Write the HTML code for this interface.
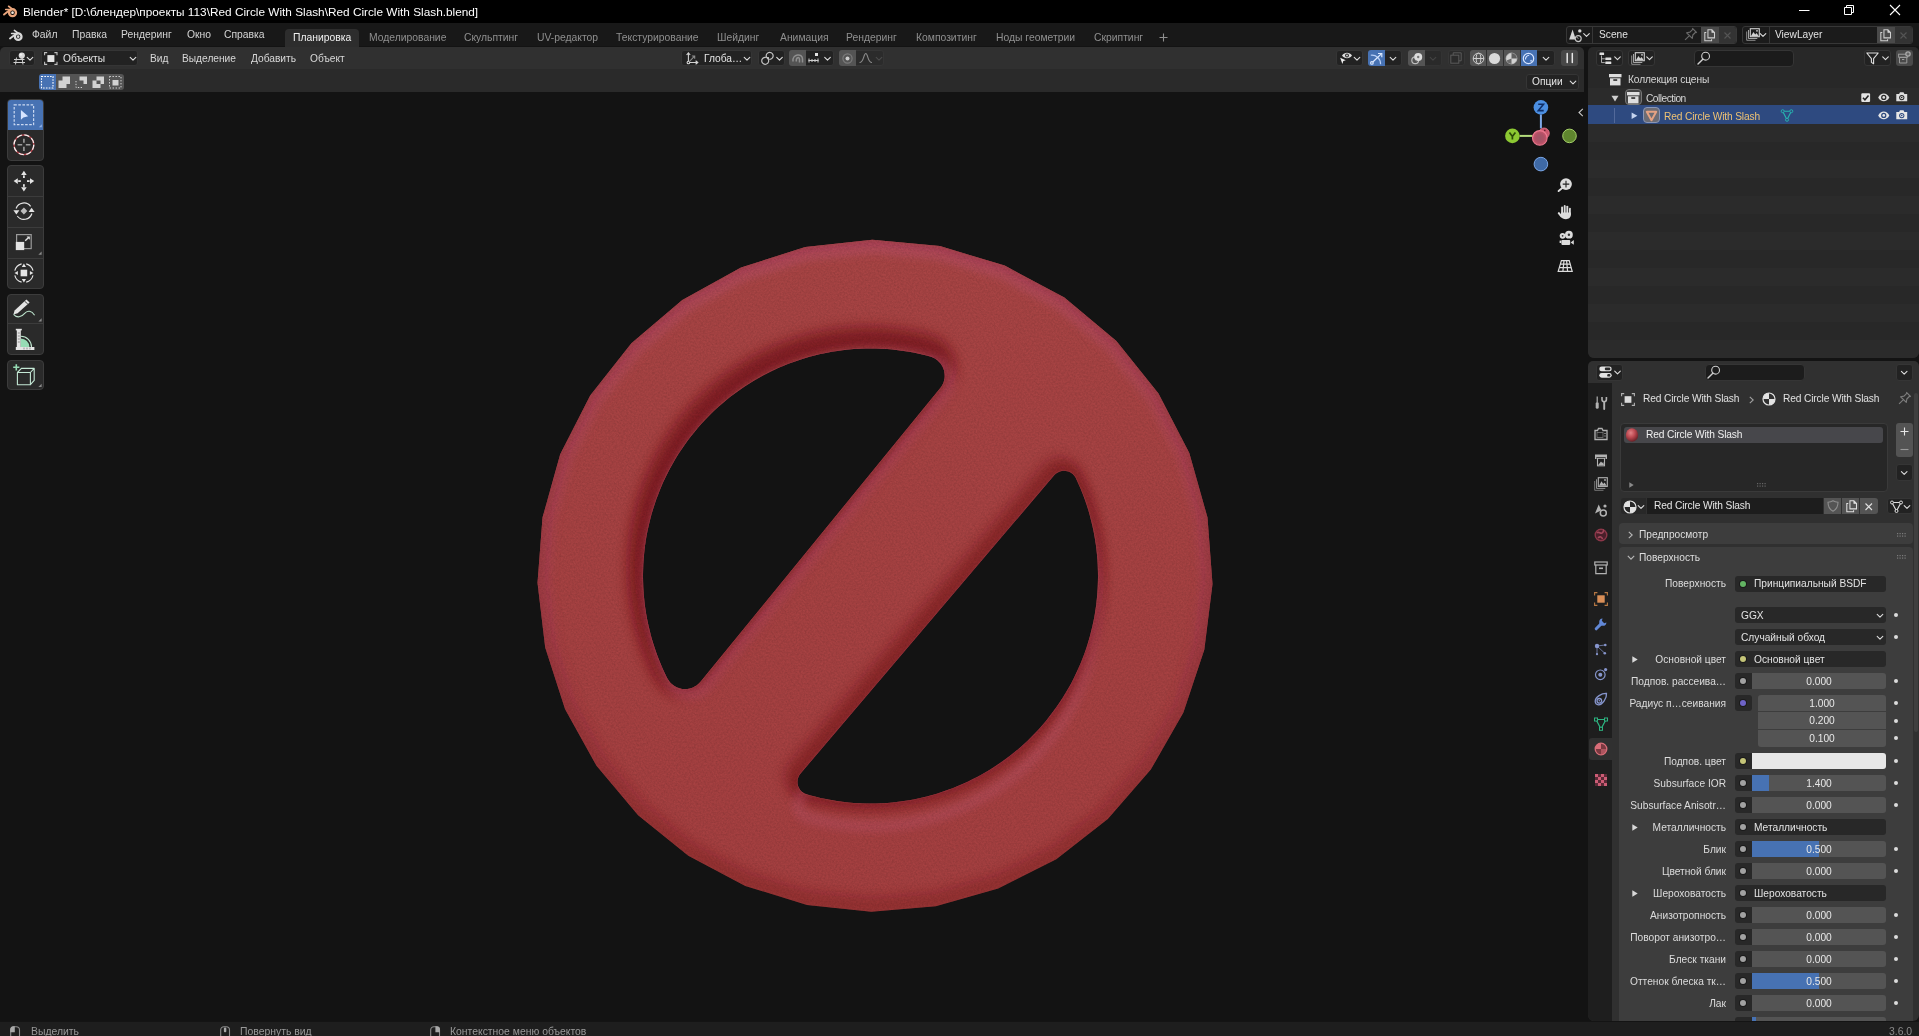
<!DOCTYPE html>
<html lang="ru"><head><meta charset="utf-8"><title>Blender</title>
<style>

*{box-sizing:border-box;margin:0;padding:0}
html,body{width:1919px;height:1036px;overflow:hidden;background:#131313}
body{font-family:"Liberation Sans",sans-serif;font-size:10.2px;color:#e0e0e0;position:relative;-webkit-font-smoothing:antialiased}
.a{position:absolute}
.t{position:absolute;white-space:nowrap;line-height:14px;height:14px;will-change:transform}
svg{position:absolute;overflow:visible}
.ic{position:absolute}
/* title bar */
#title{left:0;top:0;width:1919px;height:23px;background:#000}
#title .t{font-size:11.8px;color:#fff;left:23.3px;top:5px;line-height:15px}
/* top bar */
#topbar{left:0;top:23px;width:1919px;height:23px;background:#181818}
.mi{color:#d4d4d4;font-size:10.35px}
.tab{color:#8f8f8f;font-size:10.35px}
#tabact{left:285px;top:29px;width:74px;height:18px;background:#2d2d2d;border-radius:4px 4px 0 0}
/* 3d header */
#vhead{left:0;top:47px;width:1584px;height:22px;background:#303030;border-radius:5px 5px 0 0}
#vtool{left:0;top:69px;width:1584px;height:23px;background:#2a2a2a}
.btn{position:absolute;background:#222;border:1px solid #383838;border-radius:3px}
.btng{position:absolute;background:#4f4f4f;border-radius:3px}
.btnb{position:absolute;background:#4772b3;border-radius:3px}
/* viewport */
#view{left:0;top:92px;width:1588px;height:930px;background:#131313;overflow:hidden}
.tb{position:absolute;left:7px;width:37px;background:#2a2a2a;border:1px solid #3c3c3c;border-radius:4px;overflow:hidden}
.tb i{position:absolute;left:0;width:35px;height:1px;background:#3c3c3c}
/* status */
#status{left:0;top:1021px;width:1919px;height:15px;background:#1e1e1e;border-top:1.5px solid #141414;overflow:hidden}
#status .t{color:#999;font-size:10.4px}
/* outliner */
#outl{left:1588px;top:47px;width:331px;height:311px;background:#282828;border-radius:5px 5px 6px 6px;overflow:hidden}
.row{position:absolute;left:0;width:331px;height:18px}
.fld{position:absolute;background:#1d1d1d;border:1px solid #3a3a3a;border-radius:3px}
/* properties */
#props{left:1588px;top:360.5px;width:331px;height:660.5px;background:#303030;border-radius:5px 5px 6px 6px;overflow:hidden}
#nav{left:0;top:22px;width:24px;height:640px;background:#1e1e1e}
.panel{position:absolute;left:31px;width:294px;background:#3d3d3d;border-radius:4px}
.lab{position:absolute;white-space:nowrap;text-align:right;width:130px;left:8px;line-height:16px;height:16px;color:#dcdcdc}
.num{position:absolute;background:#545454;height:16px;line-height:16px;text-align:center;color:#e6e6e6}
.sock{position:absolute;left:147px;width:17px;height:16px;background:#282828;border-radius:3px 0 0 3px}
.sock b{position:absolute;left:5px;top:5px;width:6px;height:6px;border-radius:50%;background:#a1a1a1}
.men{position:absolute;left:147px;width:151px;height:16px;background:#282828;border-radius:3px;line-height:16px;padding-left:6px;color:#dcdcdc}
.dot{position:absolute;left:306px;width:4px;height:4px;border-radius:50%;background:#dedede}
.tri{position:absolute;width:0;height:0;border-left:6px solid #ddd;border-top:3.5px solid transparent;border-bottom:3.5px solid transparent}

</style></head>
<body>
<div id="view" class="a"></div>
<svg class="a" style="left:0;top:0" width="1588" height="1036" viewBox="0 0 1588 1036">
<defs>
<clipPath id="shp"><path d="M872.4,239.8L939.9,246.1L1004.7,265.6L1064.4,297.6L1116.4,340.9L1158.5,393.4L1189.3,453.1L1207.5,517.5L1212.5,584.0L1204.3,649.8L1183.4,712.5L1150.8,769.6L1107.8,819.1L1056.3,859.2L998.2,888.6L935.8,906.3L871.3,911.8L807.0,904.9L745.3,886.0L688.3,855.7L638.1,815.2L596.5,765.8L565.1,709.2L545.2,647.5L537.5,582.8L542.5,517.6L560.2,454.3L590.2,395.4L631.4,343.2L682.3,299.9L741.0,267.4L805.2,247.1Z M667.1,677.9L668.4,680.1L669.9,682.2L671.7,684.0L672.7,684.8L674.8,686.3L677.2,687.5L679.6,688.3L682.1,688.9L684.7,689.1L687.3,689.0L689.8,688.5L692.3,687.7L694.6,686.6L696.8,685.3L698.8,683.6L700.5,681.7L940.9,387.3L942.3,385.1L943.4,382.8L943.8,381.6L944.4,379.1L944.6,377.8L944.7,376.5L944.6,373.9L944.2,371.4L943.9,370.1L943.5,368.9L942.5,366.6L941.1,364.3L940.4,363.3L938.6,361.4L937.7,360.5L936.7,359.7L934.5,358.3L933.4,357.7L931.0,356.7L925.5,355.3L920.1,354.0L914.6,352.8L909.2,351.8L903.6,350.9L898.1,350.2L893.0,349.6L887.0,349.1L881.4,348.8L876.3,348.6L870.3,348.5L865.2,348.6L859.6,348.8L854.0,349.1L848.4,349.6L842.4,350.2L837.4,350.9L831.8,351.8L825.9,352.9L820.4,354.1L815.5,355.3L809.6,356.8L804.7,358.2L799.4,359.9L793.6,361.9L788.4,363.8L783.7,365.7L778.1,368.1L773.5,370.2L768.4,372.7L763.0,375.5L758.2,378.2L753.8,380.7L748.6,383.9L744.3,386.7L739.7,389.9L734.8,393.4L730.3,396.8L726.4,400.0L721.7,403.9L717.9,407.3L713.8,411.1L709.5,415.3L705.9,419.0L702.1,423.0L698.1,427.6L694.5,431.9L691.0,436.2L687.9,440.3L684.4,445.2L681.5,449.4L678.4,454.1L675.2,459.3L672.7,463.7L670.0,468.5L667.2,473.9L664.7,479.0L662.6,483.6L660.2,489.2L658.2,494.4L656.4,499.1L654.4,504.9L652.9,509.7L651.3,515.1L649.8,521.0L648.5,526.4L647.4,531.4L646.3,537.3L645.4,542.9L644.7,547.9L644.1,553.9L643.6,559.5L643.3,564.6L643.1,570.7L643.0,575.8L643.1,581.3L643.3,587.4L643.6,592.5L644.1,598.1L644.7,604.1L645.4,609.1L646.3,614.7L647.4,620.6L648.5,625.6L649.8,631.0L651.3,636.9L652.7,641.8L654.4,647.1L656.4,652.9L658.3,658.1L660.2,662.8L662.6,668.4L664.7,673.0Z M800.6,773.5L799.1,775.6L798.4,777.2L797.8,778.8L797.5,781.4L797.6,784.0L798.0,785.7L799.0,788.0L800.4,790.2L801.6,791.4L803.0,792.5L804.4,793.4L806.0,794.1L809.7,795.2L815.1,796.6L820.5,797.9L826.0,799.1L831.4,800.1L837.0,801.0L842.5,801.8L848.4,802.4L853.9,802.9L859.5,803.2L865.1,803.4L870.7,803.5L876.2,803.4L881.8,803.2L887.1,802.9L892.6,802.4L898.2,801.8L903.7,801.1L909.2,800.2L914.7,799.2L920.2,798.0L925.6,796.7L931.3,795.2L936.7,793.7L941.7,792.1L947.3,790.1L952.5,788.2L957.7,786.1L962.5,784.0L967.6,781.7L972.9,779.1L977.6,776.7L982.5,774.0L987.3,771.2L992.1,768.3L997.0,765.1L1001.4,762.1L1005.9,758.8L1010.6,755.2L1014.9,751.8L1019.0,748.4L1023.2,744.7L1027.3,740.9L1031.5,736.8L1035.4,732.8L1039.0,728.9L1042.7,724.7L1046.3,720.4L1049.9,715.8L1053.1,711.6L1056.4,707.1L1059.7,702.3L1062.8,697.6L1065.5,693.1L1068.5,688.0L1071.1,683.4L1073.6,678.4L1076.2,673.1L1078.4,668.3L1080.6,663.2L1082.8,657.7L1084.8,652.5L1086.5,647.5L1088.2,641.9L1089.8,636.5L1091.2,631.1L1092.4,626.0L1093.6,620.5L1094.7,614.7L1095.5,609.5L1096.3,604.0L1096.9,598.1L1097.4,592.6L1097.7,587.3L1097.9,581.4L1098.0,576.2L1097.9,570.6L1097.7,564.7L1097.4,559.4L1096.9,553.9L1096.3,548.0L1095.5,542.5L1094.6,536.9L1093.6,531.5L1092.4,526.0L1091.2,520.9L1089.8,515.5L1088.2,509.8L1086.5,504.5L1084.8,499.5L1082.8,494.3L1080.7,489.1L1078.5,484.0L1076.2,478.9L1075.4,477.3L1074.5,475.9L1072.7,474.0L1070.6,472.5L1068.3,471.4L1065.8,470.9L1063.2,470.8L1060.7,471.2L1058.3,472.2L1056.1,473.6L1054.2,475.3Z" clip-rule="evenodd"/></clipPath>
<path id="pO" d="M872.4,239.8L939.9,246.1L1004.7,265.6L1064.4,297.6L1116.4,340.9L1158.5,393.4L1189.3,453.1L1207.5,517.5L1212.5,584.0L1204.3,649.8L1183.4,712.5L1150.8,769.6L1107.8,819.1L1056.3,859.2L998.2,888.6L935.8,906.3L871.3,911.8L807.0,904.9L745.3,886.0L688.3,855.7L638.1,815.2L596.5,765.8L565.1,709.2L545.2,647.5L537.5,582.8L542.5,517.6L560.2,454.3L590.2,395.4L631.4,343.2L682.3,299.9L741.0,267.4L805.2,247.1Z"/>
<path id="pH1" d="M667.1,677.9L668.4,680.1L669.9,682.2L671.7,684.0L672.7,684.8L674.8,686.3L677.2,687.5L679.6,688.3L682.1,688.9L684.7,689.1L687.3,689.0L689.8,688.5L692.3,687.7L694.6,686.6L696.8,685.3L698.8,683.6L700.5,681.7L940.9,387.3L942.3,385.1L943.4,382.8L943.8,381.6L944.4,379.1L944.6,377.8L944.7,376.5L944.6,373.9L944.2,371.4L943.9,370.1L943.5,368.9L942.5,366.6L941.1,364.3L940.4,363.3L938.6,361.4L937.7,360.5L936.7,359.7L934.5,358.3L933.4,357.7L931.0,356.7L925.5,355.3L920.1,354.0L914.6,352.8L909.2,351.8L903.6,350.9L898.1,350.2L893.0,349.6L887.0,349.1L881.4,348.8L876.3,348.6L870.3,348.5L865.2,348.6L859.6,348.8L854.0,349.1L848.4,349.6L842.4,350.2L837.4,350.9L831.8,351.8L825.9,352.9L820.4,354.1L815.5,355.3L809.6,356.8L804.7,358.2L799.4,359.9L793.6,361.9L788.4,363.8L783.7,365.7L778.1,368.1L773.5,370.2L768.4,372.7L763.0,375.5L758.2,378.2L753.8,380.7L748.6,383.9L744.3,386.7L739.7,389.9L734.8,393.4L730.3,396.8L726.4,400.0L721.7,403.9L717.9,407.3L713.8,411.1L709.5,415.3L705.9,419.0L702.1,423.0L698.1,427.6L694.5,431.9L691.0,436.2L687.9,440.3L684.4,445.2L681.5,449.4L678.4,454.1L675.2,459.3L672.7,463.7L670.0,468.5L667.2,473.9L664.7,479.0L662.6,483.6L660.2,489.2L658.2,494.4L656.4,499.1L654.4,504.9L652.9,509.7L651.3,515.1L649.8,521.0L648.5,526.4L647.4,531.4L646.3,537.3L645.4,542.9L644.7,547.9L644.1,553.9L643.6,559.5L643.3,564.6L643.1,570.7L643.0,575.8L643.1,581.3L643.3,587.4L643.6,592.5L644.1,598.1L644.7,604.1L645.4,609.1L646.3,614.7L647.4,620.6L648.5,625.6L649.8,631.0L651.3,636.9L652.7,641.8L654.4,647.1L656.4,652.9L658.3,658.1L660.2,662.8L662.6,668.4L664.7,673.0Z"/>
<path id="pH2" d="M800.6,773.5L799.1,775.6L798.4,777.2L797.8,778.8L797.5,781.4L797.6,784.0L798.0,785.7L799.0,788.0L800.4,790.2L801.6,791.4L803.0,792.5L804.4,793.4L806.0,794.1L809.7,795.2L815.1,796.6L820.5,797.9L826.0,799.1L831.4,800.1L837.0,801.0L842.5,801.8L848.4,802.4L853.9,802.9L859.5,803.2L865.1,803.4L870.7,803.5L876.2,803.4L881.8,803.2L887.1,802.9L892.6,802.4L898.2,801.8L903.7,801.1L909.2,800.2L914.7,799.2L920.2,798.0L925.6,796.7L931.3,795.2L936.7,793.7L941.7,792.1L947.3,790.1L952.5,788.2L957.7,786.1L962.5,784.0L967.6,781.7L972.9,779.1L977.6,776.7L982.5,774.0L987.3,771.2L992.1,768.3L997.0,765.1L1001.4,762.1L1005.9,758.8L1010.6,755.2L1014.9,751.8L1019.0,748.4L1023.2,744.7L1027.3,740.9L1031.5,736.8L1035.4,732.8L1039.0,728.9L1042.7,724.7L1046.3,720.4L1049.9,715.8L1053.1,711.6L1056.4,707.1L1059.7,702.3L1062.8,697.6L1065.5,693.1L1068.5,688.0L1071.1,683.4L1073.6,678.4L1076.2,673.1L1078.4,668.3L1080.6,663.2L1082.8,657.7L1084.8,652.5L1086.5,647.5L1088.2,641.9L1089.8,636.5L1091.2,631.1L1092.4,626.0L1093.6,620.5L1094.7,614.7L1095.5,609.5L1096.3,604.0L1096.9,598.1L1097.4,592.6L1097.7,587.3L1097.9,581.4L1098.0,576.2L1097.9,570.6L1097.7,564.7L1097.4,559.4L1096.9,553.9L1096.3,548.0L1095.5,542.5L1094.6,536.9L1093.6,531.5L1092.4,526.0L1091.2,520.9L1089.8,515.5L1088.2,509.8L1086.5,504.5L1084.8,499.5L1082.8,494.3L1080.7,489.1L1078.5,484.0L1076.2,478.9L1075.4,477.3L1074.5,475.9L1072.7,474.0L1070.6,472.5L1068.3,471.4L1065.8,470.9L1063.2,470.8L1060.7,471.2L1058.3,472.2L1056.1,473.6L1054.2,475.3Z"/>
<linearGradient id="gB" gradientUnits="userSpaceOnUse" x1="0" y1="240" x2="0" y2="912"><stop offset="0" stop-color="#a94545"/><stop offset="1" stop-color="#a64041"/></linearGradient>
<linearGradient id="gP" gradientUnits="userSpaceOnUse" x1="0" y1="240" x2="0" y2="912"><stop offset="0" stop-color="#c25a76" stop-opacity=".6"/><stop offset=".55" stop-color="#c25a76" stop-opacity=".4"/><stop offset=".9" stop-color="#c25a76" stop-opacity="0"/></linearGradient>
<filter id="nz" x="0" y="0" width="100%" height="100%"><feTurbulence type="fractalNoise" baseFrequency="0.55" numOctaves="2" seed="7" result="t"/><feColorMatrix in="t" type="matrix" values="0 0 0 0 0  0 0 0 0 0  0 0 0 0 0  1.6 0 0 0 -0.55"/></filter>
<filter id="bl2" x="-10%" y="-10%" width="120%" height="120%"><feGaussianBlur stdDeviation="2"/></filter>
<filter id="bl4" x="-10%" y="-10%" width="120%" height="120%"><feGaussianBlur stdDeviation="4"/></filter>
<filter id="bl7" x="-10%" y="-10%" width="120%" height="120%"><feGaussianBlur stdDeviation="7"/></filter>
</defs>
<g clip-path="url(#shp)" fill="none">
<rect x="530" y="230" width="700" height="700" fill="url(#gB)"/>
<use href="#pO" stroke="url(#gP)" stroke-width="25" filter="url(#bl4)"/>
<use href="#pO" transform="translate(0,-5)" stroke="#720c12" stroke-width="14" filter="url(#bl7)" opacity=".42"/>
<use href="#pH1" transform="translate(-3,-3)" stroke="#720c12" stroke-width="20" filter="url(#bl7)" opacity=".34"/>
<use href="#pH2" stroke="#720c12" stroke-width="16" filter="url(#bl4)" opacity=".33"/>
<use href="#pH1" transform="translate(-2,-10)" stroke="#720c12" stroke-width="22" filter="url(#bl7)" opacity=".62"/>
<use href="#pH2" transform="translate(-5,-6)" stroke="#720c12" stroke-width="14" filter="url(#bl7)" opacity=".45"/>
<use href="#pH1" transform="translate(5,5)" stroke="#c25a76" stroke-width="12" filter="url(#bl4)" opacity=".42"/>
<use href="#pH2" transform="translate(0,23)" stroke="#c25a76" stroke-width="10" filter="url(#bl4)" opacity=".36"/>
<use href="#pH1" stroke="#c25a76" stroke-width="1.4" opacity=".22"/>
<use href="#pH2" stroke="#c25a76" stroke-width="1.4" opacity=".22"/>
<rect x="530" y="230" width="700" height="700" fill="#000" filter="url(#nz)" opacity=".09"/>
<rect x="530" y="230" width="700" height="700" fill="#ffb8a8" filter="url(#nz)" opacity=".09" transform="translate(3,5)"/>
</g>
</svg>
<div id="vhead" class="a"></div><div id="vtool" class="a"></div>
<div class="a" style="left:8.5px;top:50px;width:26.5px;height:16px;background:#222;border:1px solid #353535;border-radius:3px"></div><svg class="a" style="left:12.5px;top:51.5px" width="13" height="13"><g stroke="#cfcfcf" stroke-width="1" fill="none"><path d="M1,7.5H11.5M0.5,10.5H12M3.5,5.5L2.5,12.5M9,5.5L10,12.5"/></g><circle cx="8.8" cy="3.6" r="3.1" fill="#d6d6d6"/><circle cx="7.8" cy="2.6" r="1.2" fill="#f2f2f2"/></svg><svg class="a" style="left:0;top:0" width="1" height="1"><path d="M27.2,57.3L30.0,60.1L32.8,57.3" fill="none" stroke="#ddd" stroke-width="1.1" stroke-linecap="round" stroke-linejoin="round"/></svg><div class="a" style="left:41px;top:50px;width:97px;height:16px;background:#222;border:1px solid #353535;border-radius:3px"></div><svg class="a" style="left:43.5px;top:51.5px" width="14" height="13"><path d="M0.6,3.2V0.6H3.2M10.4,0.6H13V3.2M13,9.8V12.4H10.4M3.2,12.4H0.6V9.8" fill="none" stroke="#bdbdbd" stroke-width="1.1"/><rect x="3.4" y="3.1" width="7" height="6.9" fill="#e4e4e4"/></svg><span class="t" style="left:63px;top:51.5px;color:#e4e4e4;">Объекты</span><svg class="a" style="left:0;top:0" width="1" height="1"><path d="M130.2,57.3L133.0,60.1L135.8,57.3" fill="none" stroke="#ddd" stroke-width="1.1" stroke-linecap="round" stroke-linejoin="round"/></svg><span class="t" style="left:150px;top:51.5px;color:#d8d8d8;">Вид</span><span class="t" style="left:182px;top:51.5px;color:#d8d8d8;">Выделение</span><span class="t" style="left:251px;top:51.5px;color:#d8d8d8;">Добавить</span><span class="t" style="left:309.5px;top:51.5px;color:#d8d8d8;">Объект</span><div class="a" style="left:39px;top:73.5px;width:16.5px;height:16.5px;background:#4772b3;border-radius:3px 0 0 3px"></div><svg class="a" style="left:39px;top:73.5px" width="17" height="17"><rect x="2.5" y="2.5" width="11.5" height="11.5" fill="none" stroke="#fff" stroke-width="1.1" stroke-dasharray="1.6 1.25"/></svg><div class="a" style="left:56px;top:73.5px;width:16.5px;height:16.5px;background:#545454;"></div><div class="a" style="left:73px;top:73.5px;width:16.5px;height:16.5px;background:#545454;"></div><div class="a" style="left:90px;top:73.5px;width:16.5px;height:16.5px;background:#545454;"></div><div class="a" style="left:107px;top:73.5px;width:16.5px;height:16.5px;background:#545454;border-radius:0 3px 3px 0"></div><svg class="a" style="left:56px;top:73.5px" width="17" height="17"><path d="M6.5,2.5H14V10H10.5V14H2.5V6.5H6.5Z" fill="#d2d2d2"/></svg><svg class="a" style="left:73px;top:73.5px" width="17" height="17"><path d="M6.5,2.5H14V10H10.5V6.5H6.5Z" fill="#d2d2d2"/><path d="M3,7V13.5H10" fill="none" stroke="#d2d2d2" stroke-width="1" stroke-dasharray="1.3 1.5"/></svg><svg class="a" style="left:90px;top:73.5px" width="17" height="17"><path d="M6.5,2.5H14V10H10.5V14H2.5V6.5H6.5ZM6.5,6.5V10H10.5V6.5Z" fill="#d2d2d2" fill-rule="evenodd"/></svg><svg class="a" style="left:107px;top:73.5px" width="17" height="17"><rect x="2.5" y="2.5" width="11.5" height="11.5" fill="none" stroke="#d2d2d2" stroke-width="1" stroke-dasharray="1.4 1.6"/><rect x="5.5" y="6" width="6" height="5.5" fill="#d2d2d2"/></svg><div class="a" style="left:681px;top:50px;width:71px;height:16px;background:#222;border:1px solid #353535;border-radius:3px"></div><svg class="a" style="left:684.5px;top:51.5px" width="14" height="13"><g fill="none" stroke="#d2d2d2" stroke-width="1.1"><path d="M3.4,9.2V1.2M1.6,3L3.4,0.8L5.2,3M4.7,10.5H12.2M10.6,8.7L12.8,10.5L10.6,12.3"/><circle cx="3.4" cy="10.5" r="1.3"/><path d="M4.3,9.6L9.3,4.4M6.9,4H9.7V6.8" stroke="#8c8c8c"/></g></svg><span class="t" style="left:704px;top:51.5px;color:#e4e4e4;">Глоба…</span><svg class="a" style="left:0;top:0" width="1" height="1"><path d="M744.2,57.3L747.0,60.1L749.8,57.3" fill="none" stroke="#ddd" stroke-width="1.1" stroke-linecap="round" stroke-linejoin="round"/></svg><div class="a" style="left:758px;top:50px;width:26.5px;height:16px;background:#222;border:1px solid #353535;border-radius:3px"></div><svg class="a" style="left:761px;top:52px" width="14" height="13"><g fill="none" stroke="#c4c4c4" stroke-width="1.2"><path d="M6.1,6.2A3.5,3.5 0 1 1 8.3,7.3"/><path d="M6.9,6.6A3.5,3.5 0 1 1 4.9,5.4"/></g><circle cx="7" cy="5.9" r="1" fill="#e8e8e8"/></svg><svg class="a" style="left:0;top:0" width="1" height="1"><path d="M776.7,57.3L779.5,60.1L782.3,57.3" fill="none" stroke="#ddd" stroke-width="1.1" stroke-linecap="round" stroke-linejoin="round"/></svg><div class="a" style="left:789px;top:50px;width:17px;height:16px;background:#545454;border-radius:3px 0 0 3px"></div><svg class="a" style="left:790.5px;top:52px" width="14" height="12"><g fill="none" stroke="#8f8f8f" stroke-width="1.5"><path d="M2,9.5C1,2 11.5,0.5 11.5,7V10.5"/><path d="M5.3,9.5C4.8,5 8.5,4.5 8.5,7.5V10.5"/></g></svg><div class="a" style="left:806px;top:50px;width:27.5px;height:16px;background:#222;border:1px solid #353535;border-left:none;border-radius:0 3px 3px 0"></div><svg class="a" style="left:808px;top:52px" width="13" height="12"><g stroke="#cfcfcf" stroke-width="1" fill="none"><path d="M0.5,8.5H10.5M1,6.5V10.5M4,7V10M7,7V10M10,6.5V10.5"/></g><rect x="7" y="1" width="3" height="3" fill="#e4e4e4"/></svg><svg class="a" style="left:0;top:0" width="1" height="1"><path d="M824.7,57.3L827.5,60.1L830.3,57.3" fill="none" stroke="#ddd" stroke-width="1.1" stroke-linecap="round" stroke-linejoin="round"/></svg><div class="a" style="left:839px;top:50px;width:17px;height:16px;background:#545454;border-radius:3px 0 0 3px"></div><svg class="a" style="left:841px;top:51.5px" width="13" height="13"><circle cx="6.5" cy="6.5" r="4.6" fill="none" stroke="#7a7a7a" stroke-width="1.2"/><circle cx="6.5" cy="6.5" r="2" fill="#cdcdcd"/></svg><div class="a" style="left:856px;top:50px;width:28px;height:16px;background:#2b2b2b;border:1px solid #353535;border-left:none;border-radius:0 3px 3px 0"></div><svg class="a" style="left:858.5px;top:52px" width="14" height="12"><path d="M0.5,10.5C5,10.5 4.5,1.5 6.8,1.5C9,1.5 8.5,10.5 13,10.5" fill="none" stroke="#8a8a8a" stroke-width="1.1"/></svg><svg class="a" style="left:0;top:0" width="1" height="1"><path d="M876.2,57.3L879.0,60.1L881.8,57.3" fill="none" stroke="#4a4a4a" stroke-width="1.1" stroke-linecap="round" stroke-linejoin="round"/></svg><div class="a" style="left:1336px;top:50px;width:26.5px;height:16px;background:#222;border:1px solid #353535;border-radius:3px"></div><svg class="a" style="left:1338.5px;top:51px" width="14" height="14"><path d="M3,4.6C5.5,0.8 10.5,0.8 13,4.6C10.5,8.2 5.5,8.2 3,4.6Z" fill="#dcdcdc"/><circle cx="8" cy="4.5" r="1.9" fill="#222"/><circle cx="8" cy="4.5" r="0.9" fill="#dcdcdc"/><path d="M1.2,6.8L6.8,9.3L4.3,10.1L3.4,12.9Z" fill="#f0f0f0"/></svg><svg class="a" style="left:0;top:0" width="1" height="1"><path d="M1354.2,57.3L1357.0,60.1L1359.8,57.3" fill="none" stroke="#ddd" stroke-width="1.1" stroke-linecap="round" stroke-linejoin="round"/></svg><div class="a" style="left:1368px;top:50px;width:16.5px;height:16px;background:#4772b3;border-radius:3px 0 0 3px"></div><svg class="a" style="left:1369.5px;top:51.5px" width="14" height="13"><g fill="none" stroke="#dce9ff" stroke-width="1.15"><path d="M10.6,12.2A8.8,8.8 0 0 0 0.8,3.2" stroke="#b9d0f7"/><path d="M2.8,10L11.2,2"/><path d="M8,1.5H11.8V5.3" /><circle cx="1.9" cy="10.9" r="1.3"/></g></svg><div class="a" style="left:1384.5px;top:50px;width:17px;height:16px;background:#222;border:1px solid #353535;border-left:none;border-radius:0 3px 3px 0"></div><svg class="a" style="left:0;top:0" width="1" height="1"><path d="M1390.2,57.3L1393.0,60.1L1395.8,57.3" fill="none" stroke="#ddd" stroke-width="1.1" stroke-linecap="round" stroke-linejoin="round"/></svg><div class="a" style="left:1408px;top:50px;width:16.5px;height:16px;background:#545454;border-radius:3px 0 0 3px"></div><svg class="a" style="left:1409.5px;top:51.5px" width="14" height="13"><circle cx="5.2" cy="8.2" r="3.4" fill="none" stroke="#bdbdbd" stroke-width="1.2"/><circle cx="8.2" cy="5" r="4" fill="#dcdcdc"/><circle cx="8.2" cy="5" r="1.2" fill="#777"/><path d="M5.2,8.2L7,9.3" stroke="#777" stroke-width="1"/></svg><div class="a" style="left:1424.5px;top:50px;width:17px;height:16px;background:#2a2a2a;border:1px solid #333;border-left:none;border-radius:0 3px 3px 0"></div><svg class="a" style="left:0;top:0" width="1" height="1"><path d="M1430.2,57.3L1433.0,60.1L1435.8,57.3" fill="none" stroke="#444" stroke-width="1.1" stroke-linecap="round" stroke-linejoin="round"/></svg><div class="a" style="left:1448px;top:50px;width:16.5px;height:16px;background:#2b2b2b;border:1px solid #363636;border-radius:3px"></div><svg class="a" style="left:1450px;top:52px" width="13" height="12"><g fill="none" stroke="#5a5a5a" stroke-width="1"><rect x="0.8" y="3.2" width="8" height="8"/><path d="M3.2,3.2V0.8H11.2V8.8H8.8"/></g></svg><div class="a" style="left:1470px;top:50px;width:16.3px;height:16px;background:#545454;border-radius:3px 0 0 3px"></div><div class="a" style="left:1486.8px;top:50px;width:16.3px;height:16px;background:#545454;"></div><div class="a" style="left:1503.6px;top:50px;width:16.3px;height:16px;background:#545454;"></div><div class="a" style="left:1520.5px;top:50px;width:16.5px;height:16px;background:#4772b3"></div><svg class="a" style="left:1471.5px;top:51.5px" width="13" height="13"><g fill="none" stroke="#cfcfcf" stroke-width="1"><circle cx="6.5" cy="6.5" r="5.3"/><ellipse cx="6.5" cy="6.5" rx="2.3" ry="5.3"/><path d="M1.2,6.5H11.8"/></g></svg><svg class="a" style="left:1488.3px;top:51.5px" width="13" height="13"><circle cx="6.5" cy="6.5" r="5.6" fill="#d9d9d9"/></svg><svg class="a" style="left:1505.1px;top:51.5px" width="13" height="13"><circle cx="6.5" cy="6.5" r="5.4" fill="#d2d2d2" stroke="#c6c6c6" stroke-width="0.8"/><path d="M6.5,6.5V1.1A5.4,5.4 0 0 1 11.9,6.5Z" fill="#5e5e5e"/><path d="M6.5,6.5V11.9A5.4,5.4 0 0 1 1.6,8.6Z" fill="#6a6a6a"/></svg><svg class="a" style="left:1522.3px;top:51.5px" width="13" height="13"><circle cx="6.5" cy="6.5" r="5.2" fill="#3f6bb0" stroke="#d8e6ff" stroke-width="1.2"/><path d="M3.5,7.5C3.3,5.2 5,3.4 7.2,3.3" fill="none" stroke="#d8e6ff" stroke-width="1.1"/><circle cx="9.2" cy="8.8" r="1.1" fill="#a9c5f2"/></svg><div class="a" style="left:1537px;top:50px;width:18px;height:16px;background:#222;border:1px solid #353535;border-left:none;border-radius:0 3px 3px 0"></div><svg class="a" style="left:0;top:0" width="1" height="1"><path d="M1543.2,57.3L1546.0,60.1L1548.8,57.3" fill="none" stroke="#ddd" stroke-width="1.1" stroke-linecap="round" stroke-linejoin="round"/></svg><div class="a" style="left:1561px;top:50px;width:16.5px;height:16px;background:#474747;border-radius:3px"></div><svg class="a" style="left:1564.5px;top:53px" width="10" height="10"><path d="M2.2,0.5V9.5M7.3,0.5V9.5" stroke="#e6e6e6" stroke-width="1.5" stroke-linecap="round"/></svg><div class="a" style="left:1525.5px;top:73.5px;width:53px;height:16.5px;background:#232323;border:1px solid #353535;border-radius:3px"></div><span class="t" style="left:1532px;top:75px;color:#e4e4e4;">Опции</span><svg class="a" style="left:0;top:0" width="1" height="1"><path d="M1570.2,81.1L1573.0,83.9L1575.8,81.1" fill="none" stroke="#ddd" stroke-width="1.1" stroke-linecap="round" stroke-linejoin="round"/></svg>
<div class="tb" style="top:99px;height:62px"><div class="a" style="left:0;top:0;width:35px;height:30px;background:#4772b3"></div></div><div class="tb" style="top:165px;height:124px"><i style="top:30px"></i><i style="top:61px"></i><i style="top:92px"></i></div><div class="tb" style="top:293.5px;height:61.5px"><i style="top:28.5px"></i></div><div class="tb" style="top:359.5px;height:30.5px"></div><svg class="a" style="left:0px;top:92px" width="50" height="300"><rect x="14.2" y="12.9" width="19.4" height="19.8" fill="none" stroke="#cbd9f2" stroke-width="1.2" stroke-dasharray="2.6 1.5"/><path d="M20.9,18.1V27.7L23.4,25.4L28.2,24.3Z" fill="#d6e4ff"/><path d="M41.8,32.3V35.3H38.8Z" fill="#8fb0e4"/><circle cx="23.9" cy="52.8" r="9.9" fill="none" stroke="#b8474f" stroke-width="1.3"/><circle cx="23.9" cy="52.8" r="9.9" fill="none" stroke="#f4f4f4" stroke-width="1.3" stroke-dasharray="5.2 2.6"/><path d="M17.6,52.8H22.2M25.8,52.8H30.4M23.9,46.8V50.8M23.9,54.8V59" stroke="#9e9e9e" stroke-width="1.6" fill="none"/><g fill="#e4e4e4"><path d="M23.9,78.8L26.7,83H21.1Z"/><path d="M23.9,99.4L26.7,95.2H21.1Z"/><path d="M13.6,89.1L17.8,86.3V91.9Z"/><path d="M34.2,89.1L30,86.3V91.9Z"/><rect x="23" y="83.4" width="1.8" height="2.6"/><rect x="23" y="92.2" width="1.8" height="2.6"/><rect x="18.2" y="88.2" width="2.6" height="1.8"/><rect x="27" y="88.2" width="2.6" height="1.8"/></g><path d="M16.1,116.5A8.3,8.3 0 0 1 30.6,114.3M31.9,121.5A8.3,8.3 0 0 1 17.3,124" fill="none" stroke="#e4e4e4" stroke-width="1.2"/><path d="M13.4,118.2H19.4L16.4,122.4Z" fill="#e4e4e4"/><path d="M28.6,120L31.6,115.8L34.6,120Z" fill="#e4e4e4"/><path d="M23.9,115.6L27.3,119L23.9,122.4L20.5,119Z" fill="#bcbcbc"/><rect x="16.6" y="142.6" width="14.6" height="14" fill="none" stroke="#9a9a9a" stroke-width="1.2"/><rect x="15.8" y="149.9" width="8.4" height="8.2" fill="#e4e4e4"/><path d="M25.2,148.8L28.6,145.6" stroke="#e4e4e4" stroke-width="1.4"/><path d="M26.6,144.6H29.8V147.8Z" fill="#e4e4e4"/><path d="M41.6,159.5V162.8H38.3Z" fill="#8a8a8a"/><g fill="none" stroke="#e4e4e4" stroke-width="1.1"><path d="M26.2,171.9A9.4,9.4 0 0 1 33,178.7M33,183.3A9.4,9.4 0 0 1 26.2,190.1M21.6,190.1A9.4,9.4 0 0 1 14.8,183.3M14.8,178.7A9.4,9.4 0 0 1 21.6,171.9"/></g><rect x="20.6" y="177.7" width="6.6" height="6.6" fill="#e4e4e4"/><g fill="#e4e4e4"><path d="M23.9,171.6L26,175H21.8Z"/><path d="M23.9,190.4L26,187H21.8Z"/><path d="M14.5,181L17.9,178.9V183.1Z"/><path d="M33.3,181L29.9,178.9V183.1Z"/></g><path d="M26.4,207.6L29.6,210.4L17.6,221.2L13.4,222.6L14.6,218.4Z" fill="#e4e4e4"/><path d="M24.6,209.2L27.8,212" stroke="#2b2b2b" stroke-width="0.9"/><path d="M13.6,222.4C17,226.5 21.5,225 24.4,221.6C27.5,218 31.5,218.6 34.6,223.2" fill="none" stroke="#bfe6cf" stroke-width="1.1"/><path d="M41.6,226.2V229.4H38.4Z" fill="#8a8a8a"/><rect x="16.8" y="237" width="4" height="20.6" fill="#e4e4e4"/><rect x="15.8" y="255" width="18.6" height="3" fill="#e4e4e4"/><rect x="15.8" y="236.8" width="6" height="1.6" fill="#e4e4e4"/><path d="M20.8,255V246.4A8.6,8.6 0 0 1 29.4,255Z" fill="#97dcb5"/><path d="M20.8,244.3A10.7,10.7 0 0 1 31.5,255" fill="none" stroke="#bfe6cf" stroke-width="1.1"/><path d="M17.8,241H19.8M17.8,244H19.8M17.8,247H19.8M17.8,250H19.8M24,255.6V257.4M27,255.6V257.4M30,255.6V257.4" stroke="#777" stroke-width="0.8"/><path d="M16.3,272.2V278.4M13.2,275.3H19.4" stroke="#97dcb5" stroke-width="1.6"/><g fill="none" stroke="#c4e8d5" stroke-width="1.1" stroke-linejoin="round"><rect x="17.4" y="280.5" width="13" height="12.2"/><path d="M17.4,280.5L21.4,276.4H34.2V288.4L30.4,292.7M30.4,280.5L34.2,276.4"/></g><path d="M41.6,291.8V295H38.4Z" fill="#8a8a8a"/></svg>
<svg class="a" style="left:1495px;top:95px" width="90" height="90"><path d="M45.9,33.4V19.5" stroke="#7ea9e8" stroke-width="2"/><path d="M37.5,40.9H24.5" stroke="#b4dc7c" stroke-width="2"/><circle cx="49" cy="38.3" r="5.3" fill="#c9566c" stroke="#e8788e" stroke-width="0.8"/><circle cx="49.8" cy="35.4" r="0.8" fill="#5a1f2c"/><defs><radialGradient id="gzr"><stop offset="0" stop-color="#9c5666"/><stop offset=".6" stop-color="#ae5166"/><stop offset="1" stop-color="#cc566c"/></radialGradient></defs><circle cx="44.8" cy="42.9" r="7.3" fill="url(#gzr)" stroke="#ea7a90" stroke-width="1.1"/><circle cx="45.9" cy="12.4" r="7.3" fill="#4b8fe2"/><circle cx="17.4" cy="40.9" r="7.3" fill="#8cc832"/><circle cx="74.5" cy="40.9" r="6.8" fill="#5f862e" stroke="#a4cf68" stroke-width="1"/><circle cx="45.9" cy="69.1" r="6.8" fill="#3e69a5" stroke="#7aa6e6" stroke-width="1"/><path d="M43.2,9.2H48.5L43.3,15.6H48.7" fill="none" stroke="#0f2e66" stroke-width="1.6"/><path d="M14.4,37.4L17.4,41.4L20.4,37.4M17.4,41.2V44.6" fill="none" stroke="#2a4a08" stroke-width="1.7"/></svg><svg class="a" style="left:1550px;top:170px" width="30" height="110"><circle cx="16" cy="14.1" r="5.9" fill="#dcdcdc"/><path d="M16,10.8V17.4M12.7,14.1H19.3" stroke="#222" stroke-width="1.1"/><path d="M12.2,18.1L8.6,21.1" stroke="#dcdcdc" stroke-width="1.9" stroke-linecap="round"/><g fill="none" stroke="#dcdcdc" stroke-linecap="round"><path d="M12.1,44V37.4" stroke-width="1.9"/><path d="M14.7,43.6V36" stroke-width="1.9"/><path d="M17.3,43.8V36.6" stroke-width="1.9"/><path d="M19.9,44.4V38.6" stroke-width="1.8"/><path d="M8.8,43.2L11.4,46.4" stroke-width="2.1"/></g><path d="M11.2,42.6H20.9V44.6C20.9,47.6 18.6,49.2 16,49.2C13.4,49.2 11.8,48 10.6,46.2Z" fill="#dcdcdc"/><circle cx="12.6" cy="65.8" r="2.9" fill="#dcdcdc"/><circle cx="18.9" cy="64.7" r="3.9" fill="#dcdcdc"/><circle cx="12.6" cy="65.8" r="0.9" fill="#333"/><circle cx="18.9" cy="64.7" r="1.2" fill="#333"/><rect x="11.4" y="69.9" width="8.8" height="5" rx="0.8" fill="#dcdcdc"/><path d="M20.6,72.4L23.8,70V74.8Z" fill="#dcdcdc"/><rect x="9.6" y="70.6" width="1.6" height="2.4" fill="#dcdcdc"/><g fill="none" stroke="#dcdcdc" stroke-width="1.2"><path d="M11.4,90.6H19.2L22.2,101.4H8.2Z"/><path d="M14,90.6L12.9,101.4M16.6,90.6L17.6,101.4M10.4,94.1H20.2M9.4,97.6H21.2"/></g></svg><svg class="a" style="left:1577.5px;top:108px" width="6" height="9"><path d="M4.8,0.8L1,4.5L4.8,8.2" fill="none" stroke="#c8c8c8" stroke-width="1.1"/></svg><div id="title" class="a"><svg class="a" style="left:3px;top:4.5px" width="14.5" height="12.5" viewBox="0 0 14 12"><g fill="none" stroke="#e9a57c" stroke-linecap="round"><path d="M1,9.2L7.2,4.4" stroke-width="1.9"/><path d="M2.6,4.3H8.4" stroke-width="1.6"/><path d="M5.4,1.2L9.2,4" stroke-width="1.6"/><circle cx="9.2" cy="7.4" r="3.3" stroke-width="2.3"/></g><circle cx="9.2" cy="7.4" r="1.3" fill="#f5e9dc"/></svg><span class="t">Blender* [D:\блендер\проекты 113\Red Circle With Slash\Red Circle With Slash.blend]</span><svg class="a" style="left:1799px;top:10px" width="11" height="1"><rect width="10.5" height="1" fill="#fff"/></svg><svg class="a" style="left:1843px;top:4px" width="12" height="12"><path d="M1.5,3.5H8.5V10.5H1.5ZM3.5,3.5V1.5H10.5V8.5H8.5" fill="none" stroke="#fff" stroke-width="1"/></svg><svg class="a" style="left:1889px;top:4px" width="12" height="12"><path d="M1,1L11,11M11,1L1,11" stroke="#fff" stroke-width="1.1" fill="none"/></svg></div>
<div id="topbar" class="a"></div>
<svg class="a" style="left:8.5px;top:29px" width="14" height="12.5" viewBox="0 0 14 12"><g fill="none" stroke="#d8d8d8" stroke-linecap="round"><path d="M1,9.2L7.2,4.4" stroke-width="1.9"/><path d="M2.6,4.3H8.4" stroke-width="1.6"/><path d="M5.4,1.2L9.2,4" stroke-width="1.6"/><circle cx="9.2" cy="7.4" r="3.3" stroke-width="2.3"/></g><circle cx="9.2" cy="7.4" r="1.3" fill="#d8d8d8"/></svg>
<span class="t mi" style="left:32px;top:28px;">Файл</span>
<span class="t mi" style="left:72px;top:28px;">Правка</span>
<span class="t mi" style="left:121px;top:28px;">Рендеринг</span>
<span class="t mi" style="left:187px;top:28px;">Окно</span>
<span class="t mi" style="left:224px;top:28px;">Справка</span>
<div id="tabact" class="a"></div>
<span class="t" style="left:293px;top:31px;color:#f0f0f0;font-size:10.35px;">Планировка</span>
<span class="t tab" style="left:369px;top:31px;">Моделирование</span>
<span class="t tab" style="left:464px;top:31px;">Скульптинг</span>
<span class="t tab" style="left:537px;top:31px;">UV-редактор</span>
<span class="t tab" style="left:616px;top:31px;">Текстурирование</span>
<span class="t tab" style="left:717px;top:31px;">Шейдинг</span>
<span class="t tab" style="left:780px;top:31px;">Анимация</span>
<span class="t tab" style="left:846px;top:31px;">Рендеринг</span>
<span class="t tab" style="left:916px;top:31px;">Композитинг</span>
<span class="t tab" style="left:996px;top:31px;">Ноды геометрии</span>
<span class="t tab" style="left:1094px;top:31px;">Скриптинг</span>
<svg class="a" style="left:1159px;top:33px" width="9" height="9"><path d="M4.5,0.5V8.5M0.5,4.5H8.5" stroke="#8f8f8f" stroke-width="1.1" fill="none"/></svg>
<div class="fld" style="left:1565.5px;top:26px;width:171px;height:17.5px;background:#1b1b1b;border-color:#373737"></div><div class="a" style="left:1592px;top:27px;width:1px;height:15.5px;background:#373737"></div><svg class="a" style="left:1569px;top:28.5px" width="14" height="14"><path d="M0.2,10.6L3.6,0.6L6.8,10.6Z" fill="#d4d4d4"/><circle cx="10.8" cy="1.9" r="1.7" fill="#d4d4d4"/><circle cx="9.2" cy="9.6" r="3" fill="#1b1b1b" stroke="#c4c4c4" stroke-width="1.2"/><path d="M9.2,9.6L7.6,8" stroke="#c4c4c4" stroke-width="1"/></svg><svg class="a" style="left:0;top:0" width="1" height="1"><path d="M1583.7,33.6L1586.5,36.4L1589.3,33.6" fill="none" stroke="#ddd" stroke-width="1.1" stroke-linecap="round" stroke-linejoin="round"/></svg><span class="t" style="left:1599px;top:28px;color:#e2e2e2;">Scene</span><svg class="a" style="left:1683px;top:28px" width="14" height="14"><g transform="rotate(45 7 7)" fill="none" stroke="#6a6a6a" stroke-width="1.15" stroke-linejoin="round"><path d="M3.8,0.6H10.2M5,0.8V5L3,7.8H11L9,5V0.8M7,7.8V14"/></g></svg><div class="a" style="left:1700.5px;top:27px;width:18px;height:15.5px;background:#4a4a4a"></div><svg class="a" style="left:1703.3px;top:28.8px" width="13" height="12.5" viewBox="0 0 12 12"><path d="M4.5,0.8H8.3L10.8,3.3V8.5H4.5Z" fill="none" stroke="#d0d0d0" stroke-width="1"/><path d="M8.2,0.8V3.4H10.8" fill="#d0d0d0" stroke="#d0d0d0" stroke-width="0.6"/><path d="M2.9,3.3H1.5V11.2H8V9.8" fill="none" stroke="#d0d0d0" stroke-width="1"/></svg><div class="a" style="left:1718.5px;top:27px;width:17px;height:15.5px;background:#333;border-radius:0 2px 2px 0"></div><svg class="a" style="left:1724px;top:32px" width="7" height="7"><path d="M0.5,0.5L6.5,6.5M6.5,0.5L0.5,6.5" stroke="#555" stroke-width="1.1" fill="none"/></svg><div class="fld" style="left:1741.5px;top:26px;width:171px;height:17.5px;background:#1b1b1b;border-color:#373737"></div><div class="a" style="left:1768.5px;top:27px;width:1px;height:15.5px;background:#373737"></div><svg class="a" style="left:1745.5px;top:28px" width="14" height="13"><path d="M0.7,3.5V12.3H9.5" fill="none" stroke="#d0d0d0" stroke-width="0.9" opacity=".7"/><path d="M2.5,2V10.5H11.3" fill="none" stroke="#d0d0d0" stroke-width="0.9" opacity=".85"/><rect x="4.3" y="0.7" width="9" height="8" fill="none" stroke="#d0d0d0" stroke-width="1.1"/><path d="M5,8L7.5,4L9.2,6.5L10.5,5L12.7,8Z" fill="#d0d0d0"/><circle cx="11" cy="2.8" r="0.9" fill="#d0d0d0"/></svg><svg class="a" style="left:0;top:0" width="1" height="1"><path d="M1760.2,33.6L1763.0,36.4L1765.8,33.6" fill="none" stroke="#ddd" stroke-width="1.1" stroke-linecap="round" stroke-linejoin="round"/></svg><span class="t" style="left:1775px;top:28px;color:#e2e2e2;">ViewLayer</span><div class="a" style="left:1876.5px;top:27px;width:18px;height:15.5px;background:#4a4a4a"></div><svg class="a" style="left:1879.3px;top:28.8px" width="13" height="12.5" viewBox="0 0 12 12"><path d="M4.5,0.8H8.3L10.8,3.3V8.5H4.5Z" fill="none" stroke="#d0d0d0" stroke-width="1"/><path d="M8.2,0.8V3.4H10.8" fill="#d0d0d0" stroke="#d0d0d0" stroke-width="0.6"/><path d="M2.9,3.3H1.5V11.2H8V9.8" fill="none" stroke="#d0d0d0" stroke-width="1"/></svg><div class="a" style="left:1894.5px;top:27px;width:17px;height:15.5px;background:#333;border-radius:0 2px 2px 0"></div><svg class="a" style="left:1900px;top:32px" width="7" height="7"><path d="M0.5,0.5L6.5,6.5M6.5,0.5L0.5,6.5" stroke="#555" stroke-width="1.1" fill="none"/></svg><div id="outl" class="a">
<div class="row" style="left:0px;top:41px;width:331px;height:18px;background:#2b2b2b"></div>
<div class="row" style="left:0px;top:77px;width:331px;height:18px;background:#2b2b2b"></div>
<div class="row" style="left:0px;top:113px;width:331px;height:18px;background:#2b2b2b"></div>
<div class="row" style="left:0px;top:149px;width:331px;height:18px;background:#2b2b2b"></div>
<div class="row" style="left:0px;top:185px;width:331px;height:18px;background:#2b2b2b"></div>
<div class="row" style="left:0px;top:221px;width:331px;height:18px;background:#2b2b2b"></div>
<div class="row" style="left:0px;top:257px;width:331px;height:18px;background:#2b2b2b"></div>
<div class="row" style="left:0px;top:293px;width:331px;height:18px;background:#2b2b2b"></div>
<div class="row" style="left:0px;top:58.4px;width:331px;height:18.6px;background:#2e4a80"></div>
</div>
<div class="a" style="left:1596px;top:49.5px;width:26.5px;height:16.5px;background:#222;border:1px solid #353535;border-radius:3px"></div>
<svg class="a" style="left:1599px;top:51.5px" width="13" height="13"><rect x="0.5" y="0.5" width="4.6" height="2.6" rx="0.6" fill="#e0e0e0"/><path d="M2.5,3.5V10.6H5.8M2.5,6.8H5.8" fill="none" stroke="#bdbdbd" stroke-width="0.9"/><rect x="6.3" y="5.4" width="6" height="2.6" rx="0.6" fill="#e0e0e0"/><rect x="6.3" y="9.4" width="6" height="2.6" rx="0.6" fill="#e0e0e0"/></svg>
<svg class="a" style="left:0;top:0" width="1" height="1"><path d="M1614.7,56.9L1617.5,59.7L1620.3,56.9" fill="none" stroke="#ddd" stroke-width="1.1" stroke-linecap="round" stroke-linejoin="round"/></svg>
<div class="a" style="left:1627.5px;top:49.5px;width:27px;height:16.5px;background:#222;border:1px solid #353535;border-radius:3px"></div>
<svg class="a" style="left:1631px;top:51.5px" width="14" height="13"><path d="M0.7,3.5V12.3H9.5" fill="none" stroke="#d0d0d0" stroke-width="0.9" opacity=".7"/><path d="M2.5,2V10.5H11.3" fill="none" stroke="#d0d0d0" stroke-width="0.9" opacity=".85"/><rect x="4.3" y="0.7" width="9" height="8" fill="none" stroke="#d0d0d0" stroke-width="1.1"/><path d="M5,8L7.5,4L9.2,6.5L10.5,5L12.7,8Z" fill="#d0d0d0"/><circle cx="11" cy="2.8" r="0.9" fill="#d0d0d0"/></svg>
<svg class="a" style="left:0;top:0" width="1" height="1"><path d="M1646.7,56.9L1649.5,59.7L1652.3,56.9" fill="none" stroke="#ddd" stroke-width="1.1" stroke-linecap="round" stroke-linejoin="round"/></svg>
<div class="fld" style="left:1694px;top:49.5px;width:99.5px;height:17px;background:#1b1b1b;border-color:#353535;border-radius:4px"></div>
<svg class="a" style="left:1697px;top:51px" width="14" height="14"><circle cx="8.6" cy="5.2" r="3.9" fill="none" stroke="#cfcfcf" stroke-width="1.1"/><path d="M5.8,8.2L1,13" stroke="#cfcfcf" stroke-width="1.4" stroke-linecap="round"/></svg>
<div class="a" style="left:1864px;top:49.5px;width:27px;height:16.5px;background:#222;border:1px solid #353535;border-radius:3px"></div>
<svg class="a" style="left:1865.5px;top:51.7px" width="13" height="13"><path d="M0.8,1H12.2L7.6,6.6V11.8L5.4,10.4V6.6Z" fill="none" stroke="#dedede" stroke-width="1.1" stroke-linejoin="round"/></svg>
<svg class="a" style="left:0;top:0" width="1" height="1"><path d="M1882.7,56.9L1885.5,59.7L1888.3,56.9" fill="none" stroke="#ddd" stroke-width="1.1" stroke-linecap="round" stroke-linejoin="round"/></svg>
<div class="a" style="left:1896px;top:49.5px;width:16.5px;height:16.5px;background:#4a4a4a;border-radius:3px"></div>
<svg class="a" style="left:1898px;top:51px" width="13" height="13"><rect x="0.6" y="3.2" width="9" height="3" fill="none" stroke="#9a9a9a" stroke-width="1"/><path d="M1.5,6.5H8.8V12H1.5Z" fill="none" stroke="#9a9a9a" stroke-width="1"/><path d="M4,8.5H6.3" stroke="#9a9a9a" stroke-width="1"/><circle cx="10" cy="3" r="2.8" fill="#a8a8a8"/><path d="M10,1.4V4.6M8.4,3H11.6" stroke="#4a4a4a" stroke-width="0.9"/></svg>
<svg class="a" style="left:1608.5px;top:73.8px" width="13" height="12"><rect x="0" y="0" width="12.5" height="3.3" fill="#dedede"/><path d="M1,4.3H11.5V11.4H1Z" fill="#dedede"/><rect x="4.3" y="5.2" width="3.9" height="1.7" fill="#333"/></svg>
<span class="t" style="left:1627.5px;top:73px;color:#d6d6d6;letter-spacing:-0.1px;">Коллекция сцены</span>
<svg class="a" style="left:1610.5px;top:95px" width="8" height="7"><path d="M0.5,0.8H7.5L4,6.4Z" fill="#cfcfcf"/></svg>
<div class="a" style="left:1624.5px;top:89px;width:17.5px;height:16px;background:#444;border:1px solid #777;border-radius:4px"></div>
<svg class="a" style="left:1627px;top:91.6px" width="13" height="12"><rect x="0" y="0" width="12.5" height="3.3" fill="#dedede"/><path d="M1,4.3H11.5V11.4H1Z" fill="#dedede"/><rect x="4.3" y="5.2" width="3.9" height="1.7" fill="#333"/></svg>
<span class="t" style="left:1645.5px;top:91.6px;color:#d6d6d6;letter-spacing:-0.5px;">Collection</span>
<svg class="a" style="left:1861px;top:92.7px" width="9.4" height="9.4" viewBox="0 0 10 10"><rect x="0.3" y="0.3" width="9.4" height="9.4" rx="1.2" fill="#e4e4e4"/><path d="M2.1,5L4.2,7.2L8,2.6" fill="none" stroke="#222" stroke-width="1.6"/></svg>
<svg class="a" style="left:1877.8px;top:92.5px" width="11.5" height="8.8" viewBox="0 0 13 10"><path d="M0.2,5C3,-0.8 10,-0.8 12.8,5C10,10.8 3,10.8 0.2,5Z" fill="#dedede"/><circle cx="6.5" cy="5" r="3" fill="#282828"/><circle cx="6.5" cy="5" r="1.5" fill="#dedede"/></svg>
<svg class="a" style="left:1895.6px;top:92px" width="11.5" height="9.7" viewBox="0 0 13 11"><path d="M0.3,2.2H3.5L4.5,0.4H8.5L9.5,2.2H12.7V10.6H0.3Z" fill="#dedede"/><circle cx="6.5" cy="6.3" r="3" fill="#282828"/><circle cx="6.5" cy="6.3" r="1.9" fill="#dedede"/><circle cx="6.5" cy="6.3" r="0.9" fill="#282828"/></svg>
<div class="a" style="left:1614px;top:107.5px;width:1px;height:15px;background:#52699a"></div>
<svg class="a" style="left:1630.5px;top:112px" width="7" height="8"><path d="M0.6,0.5L6.4,3.8L0.6,7.1Z" fill="#c5d3ee"/></svg>
<div class="a" style="left:1642.5px;top:107px;width:17.5px;height:16px;background:#6c6c74;border:1px solid #8896b8;border-radius:4px"></div>
<svg class="a" style="left:1645px;top:109.5px" width="13" height="12"><path d="M1.8,1.8H11.2L6.5,10.2Z" fill="none" stroke="#e5a283" stroke-width="2" stroke-linejoin="round"/></svg>
<span class="t" style="left:1663.5px;top:109.5px;color:#eec273;letter-spacing:-0.15px;">Red Circle With Slash</span>
<svg class="a" style="left:1781px;top:109px" width="12" height="13"><path d="M1.7,2.2H10.3L6,10.8Z" fill="none" stroke="#27b5b0" stroke-width="1.1"/><circle cx="1.7" cy="2.2" r="1.5" fill="#2e4a80" stroke="#27b5b0" stroke-width="0.9"/><circle cx="10.3" cy="2.2" r="1.5" fill="#2e4a80" stroke="#27b5b0" stroke-width="0.9"/><circle cx="6" cy="10.8" r="1.5" fill="#2e4a80" stroke="#27b5b0" stroke-width="0.9"/></svg>
<svg class="a" style="left:1877.8px;top:110.5px" width="11.5" height="8.8" viewBox="0 0 13 10"><path d="M0.2,5C3,-0.8 10,-0.8 12.8,5C10,10.8 3,10.8 0.2,5Z" fill="#e6e6e6"/><circle cx="6.5" cy="5" r="3" fill="#2e4a80"/><circle cx="6.5" cy="5" r="1.5" fill="#e6e6e6"/></svg>
<svg class="a" style="left:1895.6px;top:109.8px" width="11.5" height="9.7" viewBox="0 0 13 11"><path d="M0.3,2.2H3.5L4.5,0.4H8.5L9.5,2.2H12.7V10.6H0.3Z" fill="#e6e6e6"/><circle cx="6.5" cy="6.3" r="3" fill="#2e4a80"/><circle cx="6.5" cy="6.3" r="1.9" fill="#e6e6e6"/><circle cx="6.5" cy="6.3" r="0.9" fill="#2e4a80"/></svg><div id="props" class="a"><div id="nav" class="a"></div></div>
<div class="a" style="left:1589px;top:738px;width:23px;height:22px;background:#303030;border-radius:3px 0 0 3px"></div>
<svg class="a" style="left:1593.5px;top:395.5px" width="14" height="14"><path d="M3.2,0.5V6" stroke="#b2b2b2" stroke-width="1.2"/><rect x="1.7" y="6" width="3" height="6.8" rx="1.5" fill="#b2b2b2"/><path d="M10.2,6V13" stroke="#b2b2b2" stroke-width="1.9" stroke-linecap="round"/><path d="M8,1V3.6A2.2,2.2 0 0 0 12.4,3.6V1" fill="none" stroke="#b2b2b2" stroke-width="1.6"/></svg><svg class="a" style="left:1593.5px;top:427px" width="14" height="14"><path d="M1,3.5H3.5L4.5,1.5H8L9,3.5H13V12.5H1Z" fill="none" stroke="#b2b2b2" stroke-width="1.3"/><rect x="3" y="5.5" width="6" height="5" fill="none" stroke="#b2b2b2" stroke-width="0.8" opacity=".6"/><path d="M11,6V7M11,8.5V9.5" stroke="#b2b2b2" stroke-width="1.2"/></svg><svg class="a" style="left:1593.5px;top:452.5px" width="14" height="14"><path d="M1,1.5H13V6H11.5V4H2.5V6H1Z" fill="#b2b2b2"/><rect x="3.5" y="5.3" width="7" height="7.5" fill="none" stroke="#b2b2b2" stroke-width="1.1"/><path d="M4.2,12L7,8.5L8.3,10L9.2,9L10,12Z" fill="#b2b2b2"/></svg><svg class="a" style="left:1593.5px;top:477.3px" width="14" height="14"><path d="M0.7,4V13.3H9.5" fill="none" stroke="#b2b2b2" stroke-width="0.9" opacity=".65"/><path d="M2.5,2.3V11.4H11.3" fill="none" stroke="#b2b2b2" stroke-width="0.9" opacity=".85"/><rect x="4.3" y="0.7" width="9" height="8.7" fill="none" stroke="#b2b2b2" stroke-width="1.1"/><path d="M5,8.8L7.5,4.3L9.2,7L10.5,5.4L12.7,8.8Z" fill="#b2b2b2"/><circle cx="11" cy="3" r="0.9" fill="#b2b2b2"/></svg><svg class="a" style="left:1593.5px;top:502.6px" width="14" height="14"><path d="M1,10.5L4.7,1.5L7.3,7.2Z" fill="#b2b2b2"/><circle cx="11" cy="3" r="1.6" fill="#b2b2b2"/><circle cx="9.3" cy="10" r="3" fill="none" stroke="#b2b2b2" stroke-width="1.5"/></svg><svg class="a" style="left:1593.5px;top:528px" width="14" height="14"><circle cx="7" cy="7" r="5.8" fill="#4a1f2a" stroke="#8b3648" stroke-width="1.4"/><path d="M3,5C5,3 6,6 8,5C10,4 9,2 10,2M4,10C6,8 8,9 8.5,11" fill="none" stroke="#a0475a" stroke-width="1.6"/></svg><svg class="a" style="left:1593.5px;top:560.5px" width="14" height="14"><rect x="0.8" y="1" width="12.4" height="3" fill="none" stroke="#b2b2b2" stroke-width="1.2"/><path d="M1.8,4V12.6H12.2V4" fill="none" stroke="#b2b2b2" stroke-width="1.2"/><path d="M5,7.3H9" stroke="#b2b2b2" stroke-width="1.6"/></svg><svg class="a" style="left:1593.5px;top:591.5px" width="14" height="14"><path d="M0.6,3.4V0.6H3.4M10.6,0.6H13.4V3.4M13.4,10.6V13.4H10.6M3.4,13.4H0.6V10.6" fill="none" stroke="#b77843" stroke-width="1.1"/><rect x="3.3" y="3.3" width="7.4" height="7.4" fill="#d98f58"/></svg><svg class="a" style="left:1593.5px;top:616.6px" width="14" height="14"><path d="M2.2,11.8L7.6,6.4" stroke="#6288d6" stroke-width="3" stroke-linecap="round"/><path d="M8.6,1.6A3.6,3.6 0 1 0 12.4,5.4L10.2,6.2L7.8,3.8Z" fill="#6288d6"/></svg><svg class="a" style="left:1593.5px;top:641.5px" width="14" height="14"><path d="M3,4L11,3M3,4L10.5,11M3,4L3,12" stroke="#8695cc" stroke-width="0.9" opacity=".8"/><circle cx="3" cy="4" r="2.2" fill="#8695cc"/><circle cx="11.3" cy="3" r="1.3" fill="#8695cc"/><circle cx="10.8" cy="11.2" r="1.3" fill="#8695cc"/><circle cx="3" cy="12.2" r="1.1" fill="#8695cc"/></svg><svg class="a" style="left:1593.5px;top:666.6px" width="14" height="14"><circle cx="6.3" cy="7.8" r="4.8" fill="none" stroke="#8695cc" stroke-width="1.2"/><circle cx="6.3" cy="7.8" r="2" fill="#8695cc"/><circle cx="11.6" cy="2.6" r="1.6" fill="#8695cc"/></svg><svg class="a" style="left:1593.5px;top:691.7px" width="14" height="14"><path d="M1.2,9.5C1,5 8,1 12.5,1.3C13,6 8.5,13 4.5,12.8C2.5,12.6 1.3,11.5 1.2,9.5Z" fill="none" stroke="#8695cc" stroke-width="1.3"/><circle cx="5.3" cy="8.8" r="2.3" fill="none" stroke="#8695cc" stroke-width="1.3"/><circle cx="5.3" cy="8.8" r="0.8" fill="#8695cc"/></svg><svg class="a" style="left:1593.5px;top:716.6px" width="14" height="14"><path d="M2,2.5H12L7,12Z" fill="none" stroke="#2db380" stroke-width="1.2"/><rect x="0.5" y="1" width="3" height="3" fill="#1d1d1d" stroke="#2db380" stroke-width="1"/><rect x="10.5" y="1" width="3" height="3" fill="#1d1d1d" stroke="#2db380" stroke-width="1"/><rect x="5.5" y="10.3" width="3" height="3" fill="#1d1d1d" stroke="#2db380" stroke-width="1"/></svg><svg class="a" style="left:1593.5px;top:741.5px" width="14" height="14"><circle cx="7" cy="7" r="5.8" fill="#7a3940" stroke="#d86d78" stroke-width="1.3"/><path d="M7,7V1.2A5.8,5.8 0 0 0 1.2,7Z" fill="#d86d78"/><path d="M7,7H12.8A5.8,5.8 0 0 1 7,12.8Z" fill="#d86d78" opacity=".55"/></svg><svg class="a" style="left:1593.5px;top:773px" width="14" height="14"><rect x="1" y="1" width="12" height="12" fill="#5a2a36"/><rect x="1" y="1" width="3" height="3" fill="#cc5c75"/><rect x="1" y="7" width="3" height="3" fill="#cc5c75"/><rect x="4" y="4" width="3" height="3" fill="#cc5c75"/><rect x="4" y="10" width="3" height="3" fill="#cc5c75"/><rect x="7" y="1" width="3" height="3" fill="#cc5c75"/><rect x="7" y="7" width="3" height="3" fill="#cc5c75"/><rect x="10" y="4" width="3" height="3" fill="#cc5c75"/><rect x="10" y="10" width="3" height="3" fill="#cc5c75"/></svg>
<div class="a" style="left:1596px;top:364px;width:27px;height:16.5px;background:#222;border:1px solid #353535;border-radius:3px"></div>
<svg class="a" style="left:1599px;top:366px" width="13" height="12"><rect x="0.3" y="0.5" width="12.4" height="4.8" rx="2.4" fill="#e2e2e2"/><rect x="0.3" y="6.9" width="12.4" height="4.8" rx="2.4" fill="#e2e2e2"/><rect x="5.8" y="1.6" width="5.6" height="2.6" rx="1.2" fill="#2a2a2a"/><rect x="8.2" y="8" width="3.2" height="2.6" rx="1.2" fill="#2a2a2a"/></svg>
<svg class="a" style="left:0;top:0" width="1" height="1"><path d="M1614.7,371.1L1617.5,373.9L1620.3,371.1" fill="none" stroke="#ddd" stroke-width="1.1" stroke-linecap="round" stroke-linejoin="round"/></svg>
<div class="fld" style="left:1704.5px;top:364px;width:100px;height:16.5px;background:#1c1c1c;border-color:#353535;border-radius:4px"></div>
<svg class="a" style="left:1707px;top:365px" width="14" height="14"><circle cx="8.6" cy="5.2" r="3.9" fill="none" stroke="#cfcfcf" stroke-width="1.1"/><path d="M5.8,8.2L1,13" stroke="#cfcfcf" stroke-width="1.4" stroke-linecap="round"/></svg>
<div class="a" style="left:1896px;top:364px;width:16.5px;height:16.5px;background:#222;border:1px solid #353535;border-radius:3px"></div>
<svg class="a" style="left:0;top:0" width="1" height="1"><path d="M1901.4,371.4L1904.2,374.2L1907.0,371.4" fill="none" stroke="#ddd" stroke-width="1.1" stroke-linecap="round" stroke-linejoin="round"/></svg>
<svg class="a" style="left:1621px;top:392.5px" width="14" height="13"><path d="M0.6,3.2V0.6H3.2M10.8,0.6H13.4V3.2M13.4,9.8V12.4H10.8M3.2,12.4H0.6V9.8" fill="none" stroke="#b0b0b0" stroke-width="1.1"/><rect x="3.6" y="3.2" width="6.8" height="6.6" fill="#dcdcdc"/></svg>
<span class="t" style="left:1642.5px;top:392.2px;color:#e0e0e0;letter-spacing:-0.13px;">Red Circle With Slash</span>
<svg class="a" style="left:1749px;top:395.5px" width="5" height="8"><path d="M0.8,0.8L4.2,4L0.8,7.2" fill="none" stroke="#a0a0a0" stroke-width="1.1"/></svg>
<svg class="a" style="left:1762px;top:392px" width="14" height="14"><circle cx="7" cy="7" r="6" fill="#303030" stroke="#e2e2e2" stroke-width="1.2"/><path d="M7,7V1A6,6 0 0 0 1,7Z" fill="#e2e2e2"/><path d="M7,7H13A6,6 0 0 1 7,13Z" fill="#e2e2e2"/></svg>
<span class="t" style="left:1783px;top:392.2px;color:#e0e0e0;letter-spacing:-0.13px;">Red Circle With Slash</span>
<svg class="a" style="left:1897px;top:392.3px" width="14" height="14"><g transform="rotate(45 7 7)" fill="none" stroke="#7c7c7c" stroke-width="1.15" stroke-linejoin="round"><path d="M3.8,0.6H10.2M5,0.8V5L3,7.8H11L9,5V0.8M7,7.8V14"/></g></svg>
<div class="a" style="left:1620px;top:422.5px;width:267.5px;height:69.5px;background:#272727;border:1px solid #3a3a3a;border-radius:4px"></div>
<div class="a" style="left:1624px;top:427px;width:259px;height:16px;background:#47474b;border-radius:3px"></div>
<svg class="a" style="left:1625.3px;top:428px" width="14" height="14"><defs><radialGradient id="msg" cx="40%" cy="34%" r="66%"><stop offset="0" stop-color="#e08286"/><stop offset=".5" stop-color="#bd4a52"/><stop offset="1" stop-color="#6e2228"/></radialGradient></defs><ellipse cx="7" cy="7" rx="6.2" ry="6.7" fill="url(#msg)"/></svg>
<span class="t" style="left:1646px;top:428.2px;color:#f0f0f0;letter-spacing:-0.13px;">Red Circle With Slash</span>
<svg class="a" style="left:1629px;top:481.5px" width="5" height="6"><path d="M0.3,0.3L4.7,3L0.3,5.7Z" fill="#8a8a8a"/></svg>
<svg class="a" style="left:1757px;top:483px" width="10" height="5"><rect x="0.0" y="0.0" width="1.2" height="1.2" fill="#666"/><rect x="0.0" y="2.5" width="1.2" height="1.2" fill="#666"/><rect x="2.5" y="0.0" width="1.2" height="1.2" fill="#666"/><rect x="2.5" y="2.5" width="1.2" height="1.2" fill="#666"/><rect x="5.0" y="0.0" width="1.2" height="1.2" fill="#666"/><rect x="5.0" y="2.5" width="1.2" height="1.2" fill="#666"/><rect x="7.5" y="0.0" width="1.2" height="1.2" fill="#666"/><rect x="7.5" y="2.5" width="1.2" height="1.2" fill="#666"/></svg>
<div class="a" style="left:1896px;top:422.5px;width:16.5px;height:17.2px;background:#545454;border-radius:3px 3px 0 0"></div>
<div class="a" style="left:1896px;top:440.3px;width:16.5px;height:17.2px;background:#545454;border-radius:0 0 3px 3px"></div>
<svg class="a" style="left:1900px;top:427px" width="9" height="9"><path d="M4.5,0.5V8.5M0.5,4.5H8.5" stroke="#e6e6e6" stroke-width="1.1"/></svg>
<svg class="a" style="left:1900px;top:444.5px" width="9" height="9"><path d="M0.5,4.5H8.5" stroke="#9a9a9a" stroke-width="1.1"/></svg>
<div class="a" style="left:1896px;top:464px;width:16.5px;height:17px;background:#222;border:1px solid #353535;border-radius:3px"></div>
<svg class="a" style="left:0;top:0" width="1" height="1"><path d="M1901.4,471.6L1904.2,474.4L1907.0,471.6" fill="none" stroke="#ddd" stroke-width="1.1" stroke-linecap="round" stroke-linejoin="round"/></svg>
<div class="a" style="left:1621px;top:498px;width:25px;height:16px;background:#282828;border-radius:3px 0 0 3px"></div>
<svg class="a" style="left:1623px;top:499.5px" width="14" height="14"><circle cx="7" cy="7" r="6" fill="#282828" stroke="#e2e2e2" stroke-width="1.2"/><path d="M7,7V1A6,6 0 0 0 1,7Z" fill="#e2e2e2"/><path d="M7,7H13A6,6 0 0 1 7,13Z" fill="#e2e2e2"/></svg>
<svg class="a" style="left:0;top:0" width="1" height="1"><path d="M1638.2,505.6L1641.0,508.4L1643.8,505.6" fill="none" stroke="#ddd" stroke-width="1.1" stroke-linecap="round" stroke-linejoin="round"/></svg>
<div class="a" style="left:1646.5px;top:498px;width:176.5px;height:16px;background:#1d1d1d"></div>
<span class="t" style="left:1653.5px;top:499.2px;color:#e6e6e6;letter-spacing:-0.13px;">Red Circle With Slash</span>
<div class="a" style="left:1823.5px;top:498px;width:17.5px;height:16px;background:#545454"></div>
<svg class="a" style="left:1826.5px;top:500px" width="12" height="12"><path d="M6,0.8C4.5,1.8 2.5,2.2 1,2.2C1,6.5 2.5,9.5 6,11.2C9.5,9.5 11,6.5 11,2.2C9.5,2.2 7.5,1.8 6,0.8Z" fill="none" stroke="#8e8e8e" stroke-width="1.1"/></svg>
<div class="a" style="left:1841.5px;top:498px;width:17.5px;height:16px;background:#545454"></div>
<svg class="a" style="left:1844.5px;top:500px" width="13" height="12.5" viewBox="0 0 12 12"><path d="M4.5,0.8H8.3L10.8,3.3V8.5H4.5Z" fill="none" stroke="#e0e0e0" stroke-width="1"/><path d="M8.2,0.8V3.4H10.8" fill="#e0e0e0" stroke="#e0e0e0" stroke-width="0.6"/><path d="M2.9,3.3H1.5V11.2H8V9.8" fill="none" stroke="#e0e0e0" stroke-width="1"/></svg>
<div class="a" style="left:1859.5px;top:498px;width:18px;height:16px;background:#545454;border-radius:0 3px 3px 0"></div>
<svg class="a" style="left:1865px;top:502.5px" width="7.5" height="7.5"><path d="M0.5,0.5L7.0,7.0M7.0,0.5L0.5,7.0" stroke="#e0e0e0" stroke-width="1.1" fill="none"/></svg>
<div class="a" style="left:1887px;top:498px;width:25.5px;height:16px;background:#222;border:1px solid #353535;border-radius:3px"></div>
<svg class="a" style="left:1890px;top:499.5px" width="13" height="13"><path d="M2,2.5H11L6.5,11Z" fill="none" stroke="#dedede" stroke-width="1.1"/><circle cx="2" cy="2.5" r="1.5" fill="#222" stroke="#dedede" stroke-width="1"/><circle cx="11" cy="2.5" r="1.5" fill="#222" stroke="#dedede" stroke-width="1"/><circle cx="6.5" cy="11" r="1.5" fill="#222" stroke="#dedede" stroke-width="1"/></svg>
<svg class="a" style="left:0;top:0" width="1" height="1"><path d="M1904.2,505.6L1907.0,508.4L1909.8,505.6" fill="none" stroke="#ddd" stroke-width="1.1" stroke-linecap="round" stroke-linejoin="round"/></svg>
<div class="a" style="left:1618.5px;top:523px;width:294px;height:21px;background:#3d3d3d;border-radius:4px"></div>
<svg class="a" style="left:1628px;top:530.5px" width="5" height="8"><path d="M0.8,0.8L4.2,4L0.8,7.2" fill="none" stroke="#b8b8b8" stroke-width="1.1"/></svg>
<span class="t" style="left:1638.5px;top:528px;color:#dedede;">Предпросмотр</span>
<svg class="a" style="left:1896.5px;top:532.5px" width="10" height="5"><rect x="0.0" y="0.0" width="1.2" height="1.2" fill="#7c7c7c"/><rect x="0.0" y="2.5" width="1.2" height="1.2" fill="#7c7c7c"/><rect x="2.5" y="0.0" width="1.2" height="1.2" fill="#7c7c7c"/><rect x="2.5" y="2.5" width="1.2" height="1.2" fill="#7c7c7c"/><rect x="5.0" y="0.0" width="1.2" height="1.2" fill="#7c7c7c"/><rect x="5.0" y="2.5" width="1.2" height="1.2" fill="#7c7c7c"/><rect x="7.5" y="0.0" width="1.2" height="1.2" fill="#7c7c7c"/><rect x="7.5" y="2.5" width="1.2" height="1.2" fill="#7c7c7c"/></svg>
<div class="a" style="left:1618.5px;top:546.5px;width:294px;height:480px;background:#3d3d3d;border-radius:4px"></div>
<svg class="a" style="left:1626.5px;top:555px" width="8" height="5"><path d="M0.8,0.8L4,4.2L7.2,0.8" fill="none" stroke="#b8b8b8" stroke-width="1.1"/></svg>
<span class="t" style="left:1638.5px;top:550.8px;color:#dedede;">Поверхность</span>
<svg class="a" style="left:1896.5px;top:554.5px" width="10" height="5"><rect x="0.0" y="0.0" width="1.2" height="1.2" fill="#7c7c7c"/><rect x="0.0" y="2.5" width="1.2" height="1.2" fill="#7c7c7c"/><rect x="2.5" y="0.0" width="1.2" height="1.2" fill="#7c7c7c"/><rect x="2.5" y="2.5" width="1.2" height="1.2" fill="#7c7c7c"/><rect x="5.0" y="0.0" width="1.2" height="1.2" fill="#7c7c7c"/><rect x="5.0" y="2.5" width="1.2" height="1.2" fill="#7c7c7c"/><rect x="7.5" y="0.0" width="1.2" height="1.2" fill="#7c7c7c"/><rect x="7.5" y="2.5" width="1.2" height="1.2" fill="#7c7c7c"/></svg>
<span class="t" style="left:1586px;top:577.2px;color:#dcdcdc;width:140px;text-align:right;">Поверхность</span><div class="a" style="left:1735px;top:575.7px;width:151px;height:16px;background:#282828;border-radius:3px"></div><div class="a" style="left:1739.9px;top:580.7px;width:6px;height:6px;background:#63b463;border-radius:50%;box-shadow:0 0 0 1px #1a1a1a"></div><span class="t" style="left:1754px;top:577.2px;color:#e2e2e2;">Принципиальный BSDF</span>
<div class="a" style="left:1735px;top:607px;width:151px;height:16px;background:#282828;border-radius:3px"></div><span class="t" style="left:1741px;top:608.5px;color:#e2e2e2;">GGX</span><svg class="a" style="left:0;top:0" width="1" height="1"><path d="M1877.2,614.3L1880.0,617.1L1882.8,614.3" fill="none" stroke="#ddd" stroke-width="1.1" stroke-linecap="round" stroke-linejoin="round"/></svg><div class="a" style="left:1894px;top:613px;width:4px;height:4px;background:#dcdcdc;border-radius:50%"></div>
<div class="a" style="left:1735px;top:629px;width:151px;height:16px;background:#282828;border-radius:3px"></div><span class="t" style="left:1741px;top:630.5px;color:#e2e2e2;">Случайный обход</span><svg class="a" style="left:0;top:0" width="1" height="1"><path d="M1877.2,636.3L1880.0,639.1L1882.8,636.3" fill="none" stroke="#ddd" stroke-width="1.1" stroke-linecap="round" stroke-linejoin="round"/></svg><div class="a" style="left:1894px;top:635px;width:4px;height:4px;background:#dcdcdc;border-radius:50%"></div>
<span class="t" style="left:1586px;top:652.5px;color:#dcdcdc;width:140px;text-align:right;">Основной цвет</span><svg class="a" style="left:1632px;top:655.5px" width="6" height="7"><path d="M0.3,0.3L5.7,3.5L0.3,6.7Z" fill="#d8d8d8"/></svg><div class="a" style="left:1735px;top:651px;width:151px;height:16px;background:#282828;border-radius:3px"></div><div class="a" style="left:1739.9px;top:656px;width:6px;height:6px;background:#c4c478;border-radius:50%;box-shadow:0 0 0 1px #1a1a1a"></div><span class="t" style="left:1754px;top:652.5px;color:#e2e2e2;">Основной цвет</span>
<span class="t" style="left:1586px;top:674.5px;color:#dcdcdc;width:140px;text-align:right;">Подпов. рассеива…</span><div class="a" style="left:1735px;top:673px;width:17px;height:16px;background:#282828;border-radius:3px 0 0 3px"></div><div class="a" style="left:1739.9px;top:678px;width:6px;height:6px;background:#a1a1a1;border-radius:50%;box-shadow:0 0 0 1px #1a1a1a"></div><div class="num" style="left:1752px;top:673px;width:134px;height:16px;border-radius:0 3px 3px 0"></div><span class="t" style="left:1752px;top:674.5px;color:#e8e8e8;width:134px;text-align:center;">0.000</span><div class="a" style="left:1894px;top:679px;width:4px;height:4px;background:#dcdcdc;border-radius:50%"></div>
<span class="t" style="left:1586px;top:696.5px;color:#dcdcdc;width:140px;text-align:right;">Радиус п…сеивания</span>
<div class="a" style="left:1735px;top:695px;width:17px;height:16px;background:#282828;border-radius:3px"></div><div class="a" style="left:1739.9px;top:700px;width:6px;height:6px;background:#6e63c7;border-radius:50%;box-shadow:0 0 0 1px #1a1a1a"></div>
<div class="num" style="left:1758px;top:695px;width:128px;height:16px;border-radius:3px 3px 0 0"></div>
<div class="num" style="left:1758px;top:712px;width:128px;height:17px;"></div>
<div class="num" style="left:1758px;top:730px;width:128px;height:17px;border-radius:0 0 3px 3px"></div>
<span class="t" style="left:1758px;top:696.5px;color:#e8e8e8;width:128px;text-align:center;">1.000</span>
<span class="t" style="left:1758px;top:714.1px;color:#e8e8e8;width:128px;text-align:center;">0.200</span>
<span class="t" style="left:1758px;top:731.9px;color:#e8e8e8;width:128px;text-align:center;">0.100</span>
<div class="a" style="left:1894px;top:701px;width:4px;height:4px;background:#dcdcdc;border-radius:50%"></div><div class="a" style="left:1894px;top:718.6px;width:4px;height:4px;background:#dcdcdc;border-radius:50%"></div><div class="a" style="left:1894px;top:736.3px;width:4px;height:4px;background:#dcdcdc;border-radius:50%"></div>
<span class="t" style="left:1586px;top:754.5px;color:#dcdcdc;width:140px;text-align:right;">Подпов. цвет</span>
<div class="a" style="left:1735px;top:753px;width:17px;height:16px;background:#282828;border-radius:3px 0 0 3px"></div><div class="a" style="left:1739.9px;top:758px;width:6px;height:6px;background:#c4c478;border-radius:50%;box-shadow:0 0 0 1px #1a1a1a"></div>
<div class="a" style="left:1752px;top:753px;width:134px;height:16px;background:#e7e7e7;border-radius:0 3px 3px 0"></div>
<div class="a" style="left:1894px;top:759px;width:4px;height:4px;background:#dcdcdc;border-radius:50%"></div>
<span class="t" style="left:1586px;top:776.5px;color:#dcdcdc;width:140px;text-align:right;">Subsurface IOR</span><div class="a" style="left:1735px;top:775px;width:17px;height:16px;background:#282828;border-radius:3px 0 0 3px"></div><div class="a" style="left:1739.9px;top:780px;width:6px;height:6px;background:#a1a1a1;border-radius:50%;box-shadow:0 0 0 1px #1a1a1a"></div><div class="num" style="left:1752px;top:775px;width:134px;height:16px;background:linear-gradient(90deg,#4772b3 13.0%,#545454 13.0%);border-radius:0 3px 3px 0"></div><span class="t" style="left:1752px;top:776.5px;color:#e8e8e8;width:134px;text-align:center;">1.400</span><div class="a" style="left:1894px;top:781px;width:4px;height:4px;background:#dcdcdc;border-radius:50%"></div>
<span class="t" style="left:1586px;top:798.5px;color:#dcdcdc;width:140px;text-align:right;">Subsurface Anisotr…</span><div class="a" style="left:1735px;top:797px;width:17px;height:16px;background:#282828;border-radius:3px 0 0 3px"></div><div class="a" style="left:1739.9px;top:802px;width:6px;height:6px;background:#a1a1a1;border-radius:50%;box-shadow:0 0 0 1px #1a1a1a"></div><div class="num" style="left:1752px;top:797px;width:134px;height:16px;border-radius:0 3px 3px 0"></div><span class="t" style="left:1752px;top:798.5px;color:#e8e8e8;width:134px;text-align:center;">0.000</span><div class="a" style="left:1894px;top:803px;width:4px;height:4px;background:#dcdcdc;border-radius:50%"></div>
<span class="t" style="left:1586px;top:820.5px;color:#dcdcdc;width:140px;text-align:right;">Металличность</span><svg class="a" style="left:1632px;top:823.5px" width="6" height="7"><path d="M0.3,0.3L5.7,3.5L0.3,6.7Z" fill="#d8d8d8"/></svg><div class="a" style="left:1735px;top:819px;width:151px;height:16px;background:#282828;border-radius:3px"></div><div class="a" style="left:1739.9px;top:824px;width:6px;height:6px;background:#a1a1a1;border-radius:50%;box-shadow:0 0 0 1px #1a1a1a"></div><span class="t" style="left:1754px;top:820.5px;color:#e2e2e2;">Металличность</span>
<span class="t" style="left:1586px;top:842.5px;color:#dcdcdc;width:140px;text-align:right;">Блик</span><div class="a" style="left:1735px;top:841px;width:17px;height:16px;background:#282828;border-radius:3px 0 0 3px"></div><div class="a" style="left:1739.9px;top:846px;width:6px;height:6px;background:#a1a1a1;border-radius:50%;box-shadow:0 0 0 1px #1a1a1a"></div><div class="num" style="left:1752px;top:841px;width:134px;height:16px;background:linear-gradient(90deg,#4772b3 50.0%,#545454 50.0%);border-radius:0 3px 3px 0"></div><span class="t" style="left:1752px;top:842.5px;color:#e8e8e8;width:134px;text-align:center;">0.500</span><div class="a" style="left:1894px;top:847px;width:4px;height:4px;background:#dcdcdc;border-radius:50%"></div>
<span class="t" style="left:1586px;top:864.5px;color:#dcdcdc;width:140px;text-align:right;">Цветной блик</span><div class="a" style="left:1735px;top:863px;width:17px;height:16px;background:#282828;border-radius:3px 0 0 3px"></div><div class="a" style="left:1739.9px;top:868px;width:6px;height:6px;background:#a1a1a1;border-radius:50%;box-shadow:0 0 0 1px #1a1a1a"></div><div class="num" style="left:1752px;top:863px;width:134px;height:16px;border-radius:0 3px 3px 0"></div><span class="t" style="left:1752px;top:864.5px;color:#e8e8e8;width:134px;text-align:center;">0.000</span><div class="a" style="left:1894px;top:869px;width:4px;height:4px;background:#dcdcdc;border-radius:50%"></div>
<span class="t" style="left:1586px;top:886.5px;color:#dcdcdc;width:140px;text-align:right;">Шероховатость</span><svg class="a" style="left:1632px;top:889.5px" width="6" height="7"><path d="M0.3,0.3L5.7,3.5L0.3,6.7Z" fill="#d8d8d8"/></svg><div class="a" style="left:1735px;top:885px;width:151px;height:16px;background:#282828;border-radius:3px"></div><div class="a" style="left:1739.9px;top:890px;width:6px;height:6px;background:#a1a1a1;border-radius:50%;box-shadow:0 0 0 1px #1a1a1a"></div><span class="t" style="left:1754px;top:886.5px;color:#e2e2e2;">Шероховатость</span>
<span class="t" style="left:1586px;top:908.5px;color:#dcdcdc;width:140px;text-align:right;">Анизотропность</span><div class="a" style="left:1735px;top:907px;width:17px;height:16px;background:#282828;border-radius:3px 0 0 3px"></div><div class="a" style="left:1739.9px;top:912px;width:6px;height:6px;background:#a1a1a1;border-radius:50%;box-shadow:0 0 0 1px #1a1a1a"></div><div class="num" style="left:1752px;top:907px;width:134px;height:16px;border-radius:0 3px 3px 0"></div><span class="t" style="left:1752px;top:908.5px;color:#e8e8e8;width:134px;text-align:center;">0.000</span><div class="a" style="left:1894px;top:913px;width:4px;height:4px;background:#dcdcdc;border-radius:50%"></div>
<span class="t" style="left:1586px;top:930.5px;color:#dcdcdc;width:140px;text-align:right;">Поворот анизотро…</span><div class="a" style="left:1735px;top:929px;width:17px;height:16px;background:#282828;border-radius:3px 0 0 3px"></div><div class="a" style="left:1739.9px;top:934px;width:6px;height:6px;background:#a1a1a1;border-radius:50%;box-shadow:0 0 0 1px #1a1a1a"></div><div class="num" style="left:1752px;top:929px;width:134px;height:16px;border-radius:0 3px 3px 0"></div><span class="t" style="left:1752px;top:930.5px;color:#e8e8e8;width:134px;text-align:center;">0.000</span><div class="a" style="left:1894px;top:935px;width:4px;height:4px;background:#dcdcdc;border-radius:50%"></div>
<span class="t" style="left:1586px;top:952.5px;color:#dcdcdc;width:140px;text-align:right;">Блеск ткани</span><div class="a" style="left:1735px;top:951px;width:17px;height:16px;background:#282828;border-radius:3px 0 0 3px"></div><div class="a" style="left:1739.9px;top:956px;width:6px;height:6px;background:#a1a1a1;border-radius:50%;box-shadow:0 0 0 1px #1a1a1a"></div><div class="num" style="left:1752px;top:951px;width:134px;height:16px;border-radius:0 3px 3px 0"></div><span class="t" style="left:1752px;top:952.5px;color:#e8e8e8;width:134px;text-align:center;">0.000</span><div class="a" style="left:1894px;top:957px;width:4px;height:4px;background:#dcdcdc;border-radius:50%"></div>
<span class="t" style="left:1586px;top:974.5px;color:#dcdcdc;width:140px;text-align:right;">Оттенок блеска тк…</span><div class="a" style="left:1735px;top:973px;width:17px;height:16px;background:#282828;border-radius:3px 0 0 3px"></div><div class="a" style="left:1739.9px;top:978px;width:6px;height:6px;background:#a1a1a1;border-radius:50%;box-shadow:0 0 0 1px #1a1a1a"></div><div class="num" style="left:1752px;top:973px;width:134px;height:16px;background:linear-gradient(90deg,#4772b3 50.0%,#545454 50.0%);border-radius:0 3px 3px 0"></div><span class="t" style="left:1752px;top:974.5px;color:#e8e8e8;width:134px;text-align:center;">0.500</span><div class="a" style="left:1894px;top:979px;width:4px;height:4px;background:#dcdcdc;border-radius:50%"></div>
<span class="t" style="left:1586px;top:996.5px;color:#dcdcdc;width:140px;text-align:right;">Лак</span><div class="a" style="left:1735px;top:995px;width:17px;height:16px;background:#282828;border-radius:3px 0 0 3px"></div><div class="a" style="left:1739.9px;top:1000px;width:6px;height:6px;background:#a1a1a1;border-radius:50%;box-shadow:0 0 0 1px #1a1a1a"></div><div class="num" style="left:1752px;top:995px;width:134px;height:16px;border-radius:0 3px 3px 0"></div><span class="t" style="left:1752px;top:996.5px;color:#e8e8e8;width:134px;text-align:center;">0.000</span><div class="a" style="left:1894px;top:1001px;width:4px;height:4px;background:#dcdcdc;border-radius:50%"></div>
<span class="t" style="left:1586px;top:1018.5px;color:#dcdcdc;width:140px;text-align:right;">Шероховатость лака</span><div class="a" style="left:1735px;top:1017px;width:17px;height:16px;background:#282828;border-radius:3px 0 0 3px"></div><div class="a" style="left:1739.9px;top:1022px;width:6px;height:6px;background:#a1a1a1;border-radius:50%;box-shadow:0 0 0 1px #1a1a1a"></div><div class="num" style="left:1752px;top:1017px;width:134px;height:16px;background:linear-gradient(90deg,#4772b3 3.0%,#545454 3.0%);border-radius:0 3px 3px 0"></div><span class="t" style="left:1752px;top:1018.5px;color:#e8e8e8;width:134px;text-align:center;">0.030</span><div class="a" style="left:1894px;top:1023px;width:4px;height:4px;background:#dcdcdc;border-radius:50%"></div>
<div class="a" style="left:1914px;top:392.5px;width:4.3px;height:339px;background:#3f3f3f;border-radius:2px"></div><div id="status" class="a"><svg class="a" style="left:10px;top:3.5px" width="11" height="16"><rect x="0.7" y="0.7" width="8.8" height="15" rx="3.2" fill="none" stroke="#8c8c8c" stroke-width="1.1"/><path d="M0.2,6.3V3.6a3.4,3.4 0 0 1 3.4,-3.4h1.2V6.3Z" fill="#a8a8a8"/></svg><span class="t" style="left:30.5px;top:3.1px;">Выделить</span><svg class="a" style="left:220px;top:3.5px" width="11" height="16"><rect x="0.7" y="0.7" width="8.8" height="15" rx="3.2" fill="none" stroke="#8c8c8c" stroke-width="1.1"/><rect x="3.9" y="1.6" width="2.4" height="4.6" rx="1" fill="#a8a8a8"/></svg><span class="t" style="left:240px;top:3.1px;">Повернуть вид</span><svg class="a" style="left:430px;top:3.5px" width="11" height="16"><rect x="0.7" y="0.7" width="8.8" height="15" rx="3.2" fill="none" stroke="#8c8c8c" stroke-width="1.1"/><path d="M10,6.3V3.6a3.4,3.4 0 0 0 -3.4,-3.4h-1.2V6.3Z" fill="#a8a8a8"/></svg><span class="t" style="left:450px;top:3.1px;">Контекстное меню объектов</span><span class="t" style="left:1888.5px;top:3px;color:#8a8a8a;">3.6.0</span></div>
</body></html>
